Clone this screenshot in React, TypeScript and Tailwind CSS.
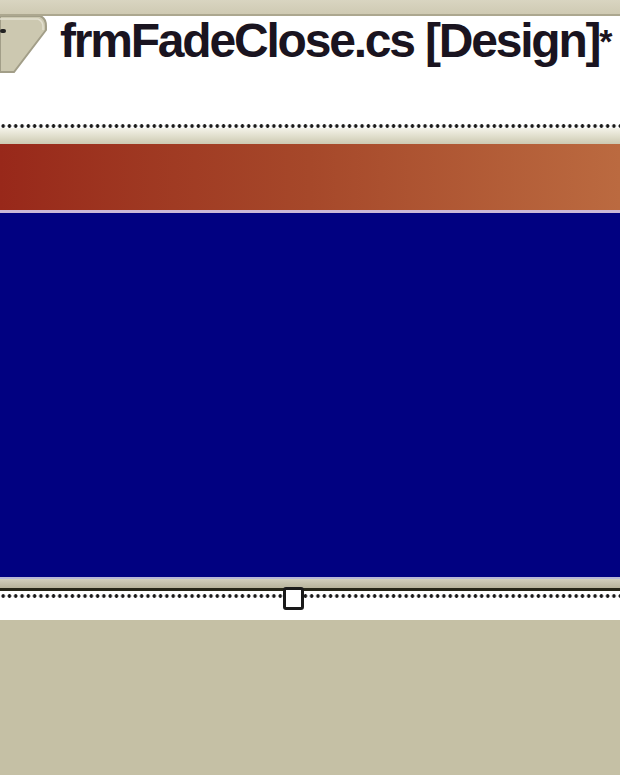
import React from "react";

export default function App() {
  return (
    <div className="relative w-[620px] h-[775px] overflow-hidden flex flex-col bg-[#c5c0a5] font-['Liberation_Sans',Arial,sans-serif]">
      {/* top strip */}
      <div className="h-[16px] shrink-0 bg-gradient-to-b from-[#d9d5c1] to-[#cfcab3] border-b-2 border-[#aca78f]" />
      {/* tab row */}
      <div className="h-[108px] shrink-0 bg-white flex items-start">
        <svg width="50" height="60" viewBox="0 0 50 60" className="shrink-0">
          <path d="M0 0 L40 0 Q46 2 46 10 L46 14 L14 56 L0 56 Z" fill="#ccc8b0" stroke="#a29e88" strokeWidth="2" />
          <path d="M0 3 L38 3 Q43 5 43 11 L43 14" fill="none" stroke="#e2dfcf" strokeWidth="1.5" />
          <rect x="0" y="13" width="6" height="4" rx="2" fill="#222" />
        </svg>
        <div className="ml-[10px] mt-[1px] text-[48px] leading-[48px] font-bold tracking-[-2.2px] text-[#1a1420] whitespace-nowrap">
          frmFadeClose.cs [Design]<span className="text-[34px] align-top">*</span>
        </div>
      </div>
      {/* dotted selection line */}
      <div className="h-[4px] shrink-0 bg-white bg-[radial-gradient(circle,#1a1a1a_1.5px,transparent_2.1px)] bg-[length:6.3px_4px]" />
      {/* form border top */}
      <div className="h-[16px] shrink-0 bg-gradient-to-b from-[#f4f3ea] via-[#e1dfcd] to-[#cdc9b2]" />
      {/* caption bar */}
      <div className="h-[66px] shrink-0 bg-gradient-to-r from-[#98281a] via-[#a6482a] to-[#bb6a40]" />
      <div className="h-[3px] shrink-0 bg-[#cbb8d8]" />
      {/* client area */}
      <div className="h-[364px] shrink-0 bg-[#010181]" />
      {/* form border bottom */}
      <div className="h-[2px] shrink-0 bg-[#b9b8d6]" />
      <div className="h-[9px] shrink-0 bg-gradient-to-b from-[#d2cfbd] to-[#b7b39b]" />
      <div className="h-[3px] shrink-0 bg-[#262618]" />
      <div className="h-[29px] shrink-0 bg-white flex flex-col">
        <div className="h-[3px]" />
        <div className="h-[4px] bg-[radial-gradient(circle,#1a1a1a_1.5px,transparent_2.1px)] bg-[length:6.3px_4px]" />
      </div>
      {/* resize handle */}
      <div className="absolute left-[283px] top-[587px] w-[21px] h-[23px] bg-white border-[3px] border-[#1a1a1a] rounded-[3px]" />
    </div>
  );
}
